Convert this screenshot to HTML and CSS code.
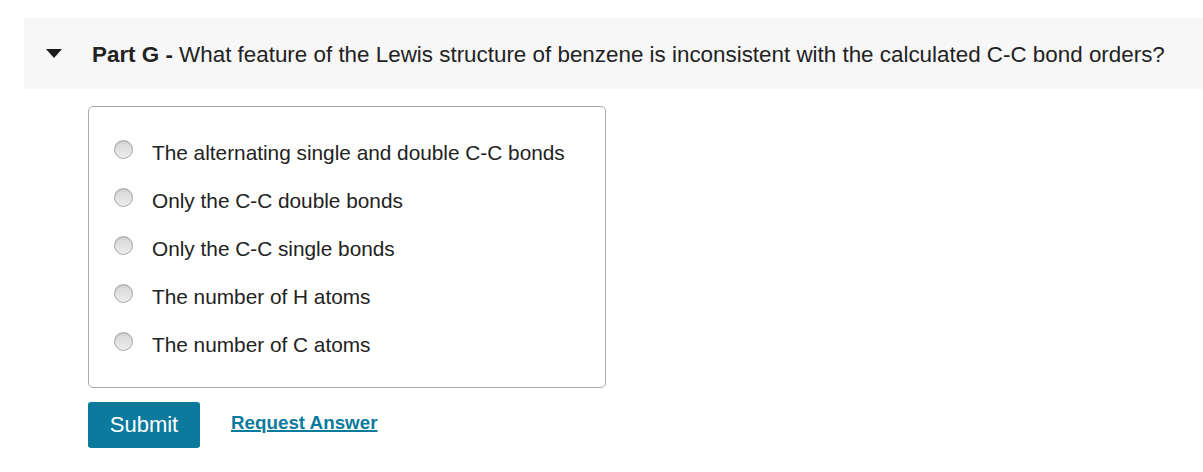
FILE: index.html
```html
<!DOCTYPE html>
<html lang="en">
<head>
  <meta charset="UTF-8">
  <meta name="viewport" content="width=device-width, initial-scale=1.0">
  <title>Part G</title>
  <link rel="stylesheet" href="styles.css">
</head>
<body>
  <div class="part">
    <div class="part-header">
      <span class="caret"></span>
      <h3><strong>Part G - </strong>What feature of the Lewis structure of benzene is inconsistent with the calculated C-C bond orders?</h3>
    </div>
    <div class="part-body">
      <div class="choices">
        <label class="choice"><input type="radio" name="answer"><span class="dot"></span>The alternating single and double C-C bonds</label>
        <label class="choice"><input type="radio" name="answer"><span class="dot"></span>Only the C-C double bonds</label>
        <label class="choice"><input type="radio" name="answer"><span class="dot"></span>Only the C-C single bonds</label>
        <label class="choice"><input type="radio" name="answer"><span class="dot"></span>The number of H atoms</label>
        <label class="choice"><input type="radio" name="answer"><span class="dot"></span>The number of C atoms</label>
      </div>
      <div class="actions">
        <button class="submit">Submit</button>
        <a href="#" class="request">Request Answer</a>
      </div>
    </div>
  </div>
</body>
</html>
```
FILE: styles.css
```css
body {
  font-family: "Liberation Sans", Arial, sans-serif;
  color: #222;
  margin: 0;
  background: white;
}
.part {
  padding: 18px 0 0 24px;
}
.part-header {
  background: #f7f7f7;
  height: 71px;
  display: flex;
  align-items: center;
}
.caret {
  width: 0;
  height: 0;
  border-left: 8px solid transparent;
  border-right: 8px solid transparent;
  border-top: 9px solid #1a1a1a;
  margin: 0 30px 0 22px;
}
.part-header h3 {
  margin: 0;
  font-size: 22.4px;
  font-weight: normal;
  color: #222;
  padding-top: 2px;
  white-space: nowrap;
}
.part-header strong {
  font-weight: bold;
}
.part-body {
  padding: 17px 0 0 64px;
}
.choices {
  width: 518px;
  height: 282px;
  border: 1px solid #aaa;
  border-radius: 5px;
  padding: 22px 0 0 25px;
  box-sizing: border-box;
}
.choice {
  display: flex;
  align-items: center;
  height: 48px;
  font-size: 20.8px;
  color: #222;
}
.choice input {
  display: none;
}
.dot {
  width: 17px;
  height: 17px;
  border-radius: 50%;
  border: 1px solid #a8a8a8;
  background: linear-gradient(#d6d6d6, #ececec);
  box-shadow: inset 0 1px 1px rgba(0,0,0,0.1);
  margin: 0 19px 0 0;
  position: relative;
  top: -4px;
}
.actions {
  display: flex;
  align-items: center;
  margin-top: 14px;
}
.submit {
  width: 112px;
  height: 46px;
  background: #0b7a9c;
  color: white;
  border: none;
  border-radius: 3px;
  font-family: "Liberation Sans", Arial, sans-serif;
  font-size: 22px;
  padding: 0;
}
.request {
  margin-left: 31px;
  color: #0b7a9c;
  font-weight: bold;
  font-size: 18.8px;
  text-decoration: underline;
  text-decoration-thickness: 2px;
  position: relative;
  top: -2px;
}
```
